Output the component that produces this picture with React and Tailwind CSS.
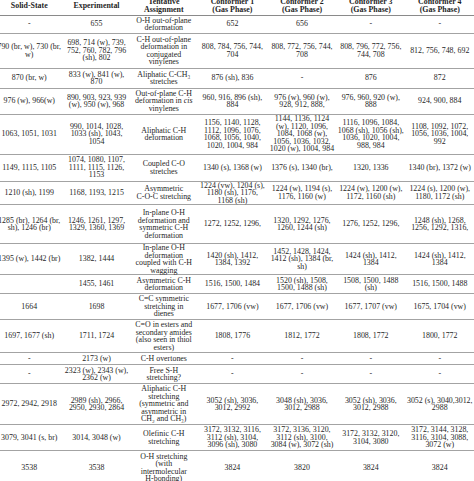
const HEAD = [
  'Solid-State',
  'Experimental',
  'Tentative\nAssignment',
  'Conformer 1\n(Gas Phase)',
  'Conformer 2\n(Gas Phase)',
  'Conformer 3\n(Gas Phase)',
  'Conformer 4\n(Gas Phase)',
]

const COLS = ['w-[67px]', 'w-[69px]', 'w-[68px]', 'w-[72px]', 'w-[69px]', 'w-[70px]', 'w-[69px]']

const ROWS = [
  { h: 'h-[18px]', cells: ['-', '655', 'O-H out-of-plane\ndeformation', '652', '656', '-', '-'] },
  {
    h: 'h-[35px]',
    cells: [
      '790 (br, w), 730 (br,\nw)',
      '698, 714 (w), 739,\n752, 760, 782, 796\n(sh), 802',
      'C-H out-of-plane\ndeformation in\nconjugated\nvinylenes',
      '808, 784, 756, 744,\n704',
      '808, 772, 756, 744,\n708',
      '808, 796, 772, 756,\n744, 708',
      '812, 756, 748, 692',
    ],
  },
  { h: 'h-[20px]', cells: ['870 (br, w)', '833 (w), 841 (w),\n870', 'Aliphatic C-CH₃\nstretches', '876 (sh), 836', '-', '876', '872'] },
  {
    h: 'h-[26px]',
    cells: [
      '976 (w), 966(w)',
      '890, 903, 923, 939\n(w), 950 (w), 968',
      <>Out-of-plane C-H{'\n'}deformation in <i>cis</i>{'\n'}vinylenes</>,
      '960, 916, 896 (sh),\n884',
      '976 (w), 960 (w),\n928, 912, 888,',
      '976, 960, 920 (w),\n888',
      '924, 900, 884',
    ],
  },
  {
    h: 'h-[40px]',
    cells: [
      '1063, 1051, 1031',
      '990, 1014, 1028,\n1033 (sh), 1043,\n1054',
      'Aliphatic C-H\ndeformation',
      '1156, 1140, 1128,\n1112, 1096, 1076,\n1068, 1056, 1040,\n1020, 1004, 984',
      '1144, 1136, 1124\n(w), 1120, 1096,\n1084, 1068 (w),\n1056, 1036, 1032,\n1020 (w), 1004, 984',
      '1116, 1096, 1084,\n1068 (sh), 1056 (sh),\n1036, 1020, 1004,\n988, 984',
      '1108, 1092, 1072,\n1056, 1036, 1004,\n992',
    ],
  },
  {
    h: 'h-[27px]',
    cells: [
      '1149, 1115, 1105',
      '1074, 1080, 1107,\n1111, 1115, 1126,\n1153',
      'Coupled C-O\nstretches',
      '1340 (s), 1368 (w)',
      '1376 (s), 1340 (br),',
      '1320, 1336',
      '1340 (br), 1372 (w)',
    ],
  },
  {
    h: 'h-[22px]',
    cells: [
      '1210 (sh), 1199',
      '1168, 1193, 1215',
      'Asymmetric\nC-O-C stretching',
      '1224 (vw), 1204 (s),\n1180 (sh), 1176,\n1168 (sh)',
      '1224 (w), 1194 (s),\n1176, 1160 (w)',
      '1224 (w), 1200 (w),\n1172, 1160 (sh)',
      '1224 (s), 1200 (w),\n1180, 1172 (sh)',
    ],
  },
  {
    h: 'h-[39px]',
    cells: [
      '1285 (br), 1264 (br,\nsh), 1246 (br)',
      '1246, 1261, 1297,\n1329, 1360, 1369',
      'In-plane O-H\ndeformation and\nsymmetric C-H\ndeformation',
      '1272, 1252, 1296,',
      '1320, 1292, 1276,\n1260, 1244 (sh)',
      '1276, 1252, 1296,',
      '1248 (sh), 1268,\n1256, 1292, 1316,',
    ],
  },
  {
    h: 'h-[31px]',
    cells: [
      '1395 (w), 1442 (br)',
      '1382, 1444',
      'In-plane O-H\ndeformation\ncoupled with C-H\nwagging',
      '1420 (sh), 1412,\n1384, 1392',
      '1452, 1428, 1424,\n1412 (sh), 1384 (br,\nsh)',
      '1424 (sh), 1412,\n1384',
      '1424 (sh), 1412,\n1384',
    ],
  },
  {
    h: 'h-[19px]',
    cells: ['', '1455, 1461', 'Asymmetric C-H\ndeformation', '1516, 1500, 1484', '1520 (sh), 1508,\n1500, 1488 (sh)', '1508, 1500, 1488\n(sh)', '1516, 1500, 1488'],
  },
  {
    h: 'h-[26px]',
    cells: ['1664', '1698', 'C=C symmetric\nstretching in\ndienes', '1677, 1706 (vw)', '1677, 1706 (vw)', '1677, 1707 (vw)', '1675, 1704 (vw)'],
  },
  {
    h: 'h-[33px]',
    cells: [
      '1697, 1677 (sh)',
      '1711, 1724',
      'C=O in esters and\nsecondary amides\n(also seen in thiol\nesters)',
      '1808, 1776',
      '1812, 1772',
      '1808, 1772',
      '1800, 1772',
    ],
  },
  { h: 'h-[12px]', cells: ['-', '2173 (w)', 'C-H overtones', '-', '-', '-', '-'] },
  { h: 'h-[19px]', cells: ['-', '2323 (w), 2343 (w),\n2362 (w)', 'Free S-H\nstretching?', '-', '-', '-', '-'] },
  {
    h: 'h-[41px]',
    cells: [
      '2972, 2942, 2918',
      '2989 (sh), 2966,\n2950, 2930, 2864',
      'Aliphatic C-H\nstretching\n(symmetric and\nasymmetric in\nCH₂ and CH₃)',
      '3052 (sh), 3036,\n3012, 2992',
      '3048 (sh), 3036,\n3012, 2988',
      '3052 (sh), 3036,\n3012, 2988',
      '3052 (s), 3040,3012,\n2988',
    ],
  },
  {
    h: 'h-[26px]',
    cells: [
      '3079, 3041 (s, br)',
      '3014, 3048 (w)',
      'Olefinic C-H\nstretching',
      '3172, 3132, 3116,\n3112 (sh), 3104,\n3096 (sh), 3080',
      '3172, 3136, 3120,\n3112 (sh), 3100,\n3084 (w), 3072 (sh)',
      '3172, 3132, 3120,\n3104, 3080',
      '3172, 3144, 3128,\n3116, 3104, 3088,\n3072 (w)',
    ],
  },
  {
    h: 'h-[34px]',
    cells: ['3538', '3538', 'O-H stretching\n(with\nintermolecular\nH-bonding)', '3824', '3820', '3824', '3824'],
  },
]

export default function App() {
  return (
    <div className="w-[474px] h-[481px] overflow-hidden bg-white font-['Liberation_Serif',serif] text-[#1f1f1f]">
      <table className="-mt-[3px] -ml-[4px] border-collapse table-fixed text-[7.9px] leading-[7.5px]">
        <thead>
          <tr className="h-[18px] border-b-[1.5px] border-[#8a8a8a]">
            {HEAD.map((t, i) => (
              <th key={i} className={`${COLS[i]} p-0 text-center align-middle font-bold whitespace-pre`}>
                {t}
              </th>
            ))}
          </tr>
        </thead>
        <tbody>
          {ROWS.map((r, ri) => (
            <tr key={ri} className={`${r.h} border-b-[1.5px] border-[#a3a3a3]`}>
              {r.cells.map((c, ci) => (
                <td key={ci} className="p-0 text-center align-middle whitespace-pre">
                  {c}
                </td>
              ))}
            </tr>
          ))}
        </tbody>
      </table>
    </div>
  )
}
